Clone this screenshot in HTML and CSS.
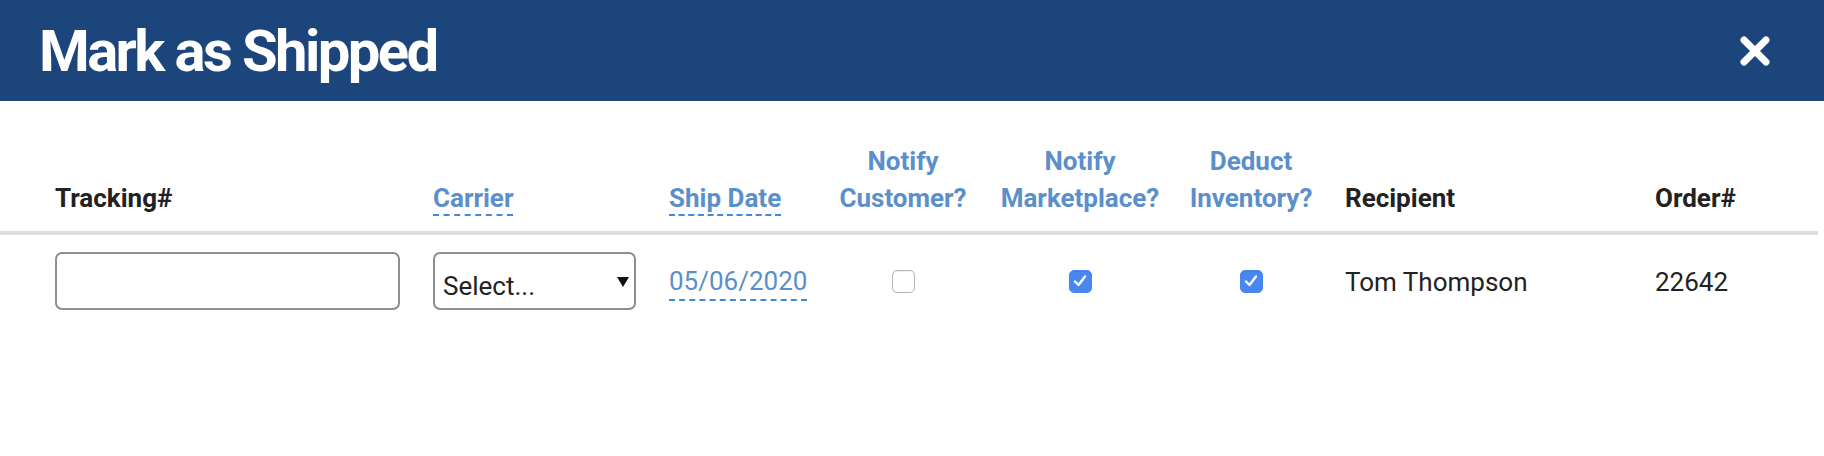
FILE: index.html
```html
<!DOCTYPE html>
<html lang="en">
<head>
<meta charset="utf-8">
<title>Mark as Shipped</title>
<link rel="stylesheet" href="styles.css">
</head>
<body>
<div class="modal">
  <header class="modal-header">
    <h1 class="title">Mark as Shipped</h1>
    <button class="close" aria-label="Close">
      <svg width="32" height="32" viewBox="0 0 32 32"><path d="M5 5 L27 27 M27 5 L5 27" stroke="#fff" stroke-width="7" stroke-linecap="round" fill="none"/></svg>
    </button>
  </header>

  <div class="grid head">
    <div class="th">Tracking#</div>
    <div class="th link"><span class="dash">Carrier</span></div>
    <div class="th link"><span class="dash">Ship Date</span></div>
    <div class="th link center">Notify<br>Customer?</div>
    <div class="th link center">Notify<br>Marketplace?</div>
    <div class="th link center">Deduct<br>Inventory?</div>
    <div class="th pad">Recipient</div>
    <div class="th">Order#</div>
  </div>

  <div class="divider"></div>

  <div class="grid row">
    <div class="td"><input class="text-input" type="text"></div>
    <div class="td">
      <div class="select">
        <span class="select-text">Select...</span>
        <svg class="caret" width="12" height="10" viewBox="0 0 12 10"><path d="M0 0 H12 L6 10 Z" fill="#111"/></svg>
      </div>
    </div>
    <div class="td"><span class="date">05/06/2020</span></div>
    <div class="td center"><span class="check"></span></div>
    <div class="td center"><span class="check on"><svg width="14" height="12" viewBox="0 0 14 12"><path d="M2 6.5 L5.5 10 L12 1.5" stroke="#fff" stroke-width="2.4" stroke-linecap="round" stroke-linejoin="round" fill="none"/></svg></span></div>
    <div class="td center"><span class="check on"><svg width="14" height="12" viewBox="0 0 14 12"><path d="M2 6.5 L5.5 10 L12 1.5" stroke="#fff" stroke-width="2.4" stroke-linecap="round" stroke-linejoin="round" fill="none"/></svg></span></div>
    <div class="td pad text">Tom Thompson</div>
    <div class="td text">22642</div>
  </div>
</div>
</body>
</html>
```

FILE: styles.css
```css
* { box-sizing: border-box; }

body {
  margin: 0;
  background: #fff;
  font-family: Roboto, "Noto Sans", Arial, sans-serif;
  color: #222;
}

.modal-header {
  height: 101px;
  background: #1c457c;
  display: flex;
  align-items: center;
  justify-content: space-between;
  padding: 0 53px 0 39px;
}

.title {
  margin: 0;
  color: #fff;
  font-size: 58px;
  font-weight: 700;
  letter-spacing: -2.6px;
  line-height: 1;
}

.close {
  border: 0;
  background: transparent;
  padding: 0;
  width: 32px;
  height: 32px;
  display: block;
  cursor: pointer;
}
.close svg { display: block; }

.grid {
  display: grid;
  grid-template-columns: 378px 236px 150px 168px 186px 156px 326px 1fr;
  padding-left: 55px;
}

.head {
  height: 130px;
  align-items: end;
  padding-bottom: 14px;
  font-size: 26px;
  font-weight: 700;
  line-height: 37px;
}

.th { color: #222; }
.th.link { color: #5b8fcb; }
.center { text-align: center; }
.pad { padding-left: 16px; }

.dash {
  display: inline-block;
  line-height: 32px;
  border-bottom: 2px dashed #3f89d6;
}

.divider {
  height: 4px;
  background: #dedede;
  margin-right: 6px;
}

.row {
  padding-top: 17px;
  align-items: center;
  font-size: 26px;
}

.td { display: flex; align-items: center; }
.td.center { justify-content: center; }
.td.text { padding-top: 2px; color: #222; }

.text-input {
  width: 345px;
  height: 58px;
  border: 2px solid #8e8e8e;
  border-radius: 7px;
  font: inherit;
  padding: 0 10px;
  outline: none;
}

.select {
  position: relative;
  width: 203px;
  height: 58px;
  border: 2px solid #8e8e8e;
  border-radius: 7px;
  display: flex;
  align-items: flex-end;
  padding: 0 0 7px 8px;
  color: #222;
  line-height: 30px;
}
.caret {
  position: absolute;
  right: 5px;
  top: 23px;
}

.date {
  color: #5b8fcb;
  line-height: 30px;
  border-bottom: 2px dashed #3f89d6;
  display: inline-block;
  padding-top: 5px;
  padding-bottom: 3px;
}

.check {
  width: 23px;
  height: 23px;
  border: 1px solid #b5b5b5;
  border-radius: 5px;
  background: #fff;
  display: flex;
  align-items: center;
  justify-content: center;
  box-shadow: inset 0 1px 1px rgba(0,0,0,0.06);
}
.check.on {
  background: #4a86f0;
  border-color: #4a86f0;
}
.check svg { display: block; }
```
